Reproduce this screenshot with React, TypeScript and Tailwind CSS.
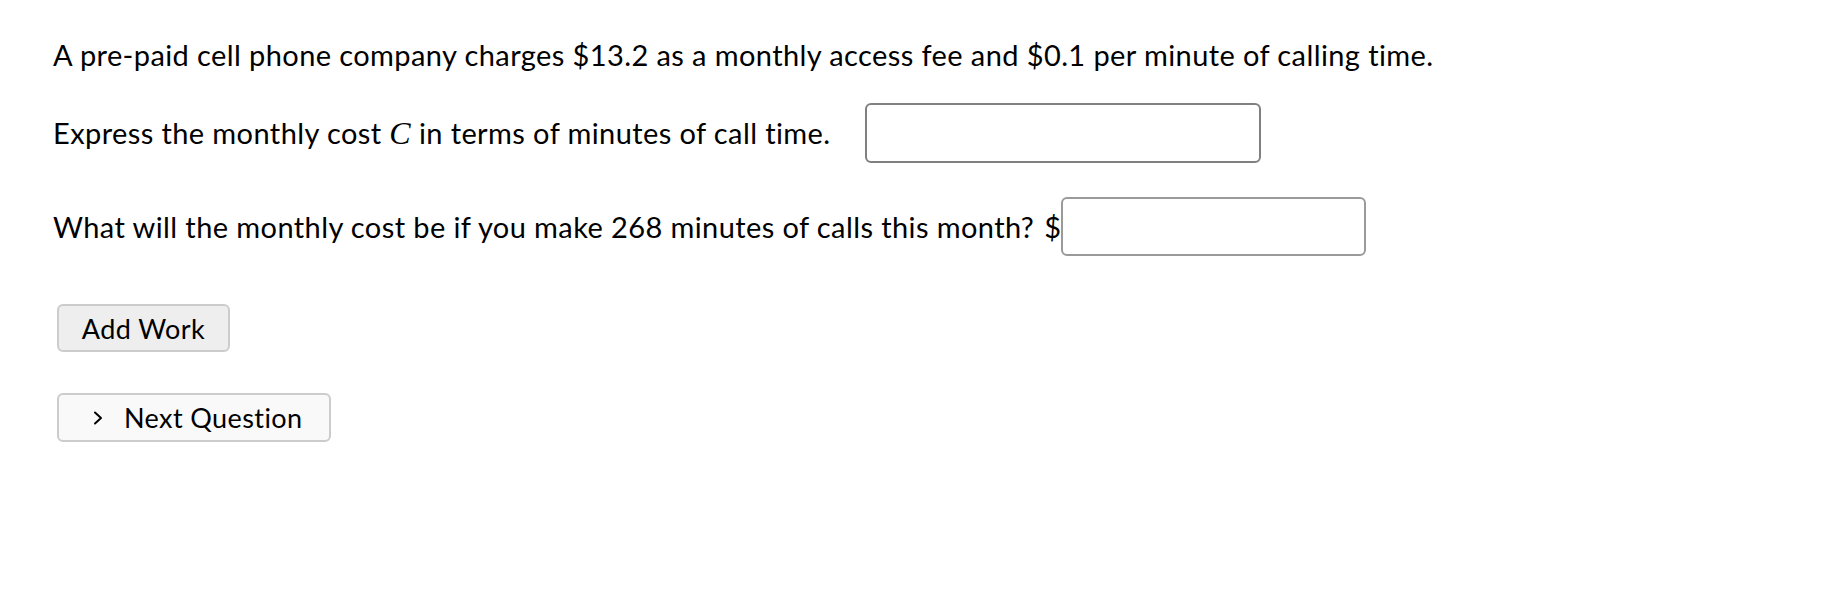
import React from 'react';

const ChevronRight = () => (
  <svg width="12" height="16" viewBox="0 0 12 16" fill="none" className="shrink-0">
    <path d="M3 2.5 L9 8 L3 13.5" stroke="#000" strokeWidth="2" strokeLinecap="round" strokeLinejoin="round" />
  </svg>
);

export default function App() {
  return (
    <div className="min-h-screen bg-white text-black font-['Lato','Noto_Sans',sans-serif] text-[29px] tracking-[0.4px] leading-[40px] pl-[53px] pt-[35px]">
      <p>A pre-paid cell phone company charges $13.2 as a monthly access fee and $0.1 per minute of calling time.</p>

      <div className="mt-[28px] flex items-center">
        <span>
          Express the monthly cost{' '}
          <span className="font-['Liberation_Serif',serif] italic text-[32px]">C</span> in terms of minutes of call time.
        </span>
        <input
          type="text"
          aria-label="Monthly cost formula"
          className="ml-[34px] h-[60px] w-[396px] rounded-[6px] border-2 border-[#808080] bg-white px-2 outline-none"
        />
      </div>

      <div className="mt-[34px] flex items-center">
        <span>What will the monthly cost be if you make 268 minutes of calls this month?</span>
        <span className="ml-[10px]">$</span>
        <input
          type="text"
          aria-label="Monthly cost in dollars"
          className="h-[59px] w-[305px] rounded-[6px] border-2 border-[#9a9a9a] bg-white px-2 outline-none"
        />
      </div>

      <div className="mt-[48px] flex flex-col items-start">
        <button className="ml-[4px] h-[48px] w-[173px] rounded-[6px] border-2 border-[#cccccc] bg-[#eeeeee] text-[27px] leading-none">
          Add Work
        </button>
        <button className="ml-[4px] mt-[41px] flex h-[49px] w-[274px] items-center gap-[20px] rounded-[6px] border-2 border-[#cccccc] bg-[#f9f9f9] pl-[33px] text-[27px] leading-none">
          <ChevronRight />
          <span>Next Question</span>
        </button>
      </div>
    </div>
  );
}
